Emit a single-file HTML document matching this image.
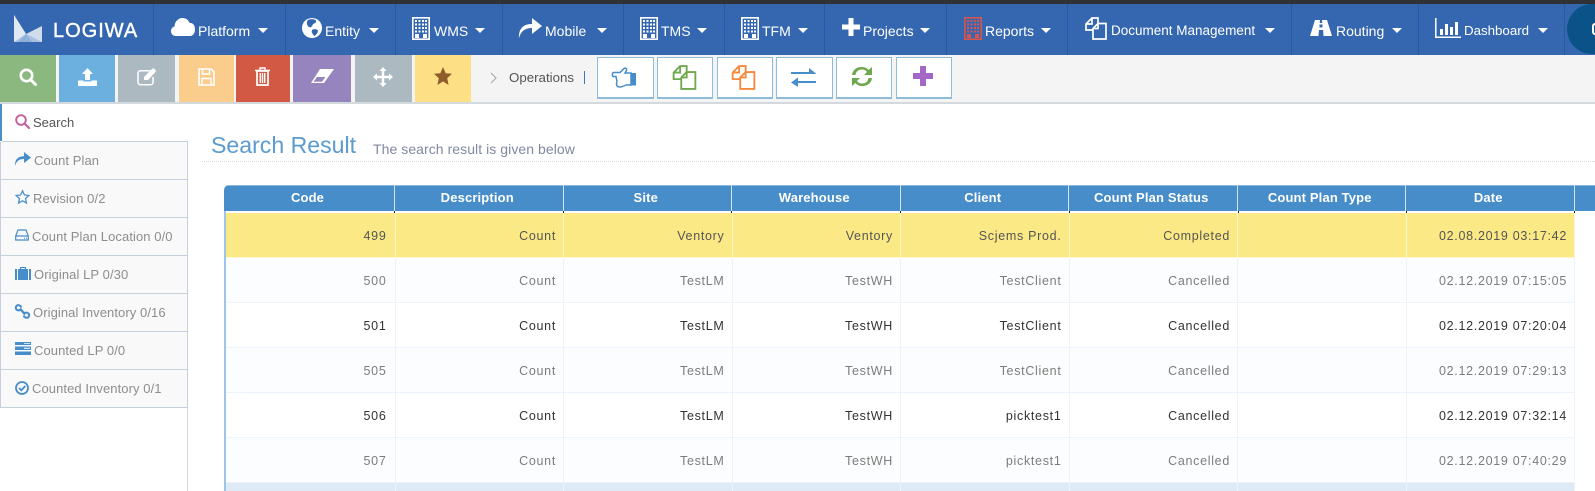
<!DOCTYPE html>
<html><head><meta charset="utf-8"><style>
html,body{margin:0;padding:0;background:#fff;width:1595px;height:491px;overflow:hidden}
body{position:relative;font-family:"Liberation Sans",sans-serif}
#p{position:absolute;left:0;top:0;width:1595px;height:491px;overflow:hidden}
.a{position:absolute}
svg{position:absolute;overflow:visible}
.dv{position:absolute;top:4px;height:51px;width:1px;background:#2a5a9e}
.n{position:absolute;top:22px;color:#fff;font-size:14px;line-height:18px;white-space:nowrap}
.c{position:absolute;top:28px;width:0;height:0;border-left:5px solid transparent;border-right:5px solid transparent;border-top:5.500px solid #fff;margin-left:-5px}
.t{position:absolute;top:55px;height:47px}
.w{position:absolute;top:57px;height:39px;background:#fff;border:1px solid #8fbcd8;border-bottom-width:2px;box-sizing:content-box}
.s{position:absolute;left:1px;width:186px;height:37px;background:#f9f9f9;border-bottom:1px solid #c5d0dc;border-right:1px solid #c5d0dc;font-size:13px;letter-spacing:.08px;line-height:37px;color:#8d8d8d;white-space:nowrap}
.s span{position:absolute;top:0}
table{position:absolute;border-collapse:separate;border-spacing:0;table-layout:fixed}
#h{top:185px;left:224px;width:1371px}
th{height:23px;padding:0 3px 2px 0;background:#478dc9;color:#fff;font-size:13px;letter-spacing:.15px;border-right:1px solid #d5e6f3;border-top:1px solid #8dbbdf;position:relative}
td{height:43px;padding:1px 7px 0 0;border-right:1px solid #edf3fa;border-bottom:1px solid #edf3fa;text-align:right;font-size:12.500px;letter-spacing:.7px;box-sizing:content-box;white-space:nowrap;overflow:hidden}
td:first-child{padding-right:8px}
.y td{background:#fbe985;color:#555;border-color:#fdf6cf}
.g td{background:#fcfdfe;color:#7c7c7c}
.k td{background:#fff;color:#333}
.b td{background:#deebf7;border-bottom:0;border-color:#eef5fb;height:8px;padding:0}
</style></head><body><div id="p">
<svg width="0" height="0" style="position:absolute"><defs>
<symbol id="bd" viewBox="0 0 18 23"><path d="M.8.8h16.400v21.400H.8z" fill="none" stroke="currentColor" stroke-width="1.600"/><path d="M3 3h2v2H3zM6.500 3h2v2h-2zM10 3h2v2h-2zM13 3h2v2h-2zM3 6.500h2v2H3zM6.500 6.500h2v2h-2zM10 6.500h2v2h-2zM13 6.500h2v2h-2zM3 10h2v2H3zM6.500 10h2v2h-2zM10 10h2v2h-2zM13 10h2v2h-2zM3 13.500h2v2H3zM6.500 13.500h2v2h-2zM10 13.500h2v2h-2zM13 13.500h2v2h-2zM3 17h4v4H3zM11 17h4v4h-4z" fill="currentColor"/></symbol>
<symbol id="dc" viewBox="0 0 22 23"><path d="M8 13H1V7l6-6h6v5.500M7 1v6H1" fill="none" stroke="currentColor" stroke-width="1.700"/><path d="M13 6.500h8V22H8V11.500zM13 6.500v5H8" fill="none" stroke="currentColor" stroke-width="1.700"/></symbol>
</defs></svg>

<div class="a" style="left:0;top:0;width:1595px;height:4px;background:#2f3135"></div>
<div class="a" style="left:0;top:4px;width:1595px;height:51px;background:#3567b0"></div>

<svg style="left:14px;top:15px" width="29" height="27" viewBox="0 0 29 27"><path d="M0 0 12 19 28 11V27H0z" fill="#cfdcec"/><path d="M0 27 12 19 28 27z" fill="#a9c1df"/><path d="M0 0 12 19 0 27z" fill="#dfe8f3"/><path d="M4 27 12 19 18 27z" fill="#8fb0d8"/></svg>
<div class="a" style="left:53px;top:20px;color:#fff;font-size:20px;line-height:22px;letter-spacing:1px;font-weight:400;-webkit-text-stroke:.4px #fff">LOGIWA</div>

<div class="dv" style="left:153px"></div><div class="dv" style="left:285px"></div><div class="dv" style="left:395px"></div><div class="dv" style="left:502px"></div><div class="dv" style="left:623px"></div><div class="dv" style="left:724px"></div><div class="dv" style="left:824px"></div><div class="dv" style="left:946px"></div><div class="dv" style="left:1067px"></div><div class="dv" style="left:1291px"></div><div class="dv" style="left:1418px"></div><div class="dv" style="left:1564px"></div>
<div class="a" style="left:1567px;top:4px;width:52px;height:50px;border-radius:26px;background:#0b5288"></div>
<div class="a" style="left:1592px;top:23px;width:6px;height:12px;border:2px solid #fff;border-radius:6px;box-sizing:border-box"></div>

<!-- nav icons -->
<svg style="left:171px;top:18px" width="24" height="18" viewBox="0 0 24 18"><path d="M5 18C2 18 0 16 0 13c0-2.500 1.500-4 3.500-4.500C3.500 4 7 0 11.500 0c3.500 0 6 2 7 5 3-.5 5.500 2 5.500 6.500 0 3.500-2 6.500-5 6.500z" fill="#fff"/></svg>
<svg style="left:302px;top:18px" width="20" height="20" viewBox="0 0 20 20"><circle cx="10" cy="10" r="10" fill="#fff"/><path d="M6 2c3-1.500 7-1 8 .5.500 2-1 3-3 3.500-1 2.500-2 4-4 3C5 8 4 4 6 2zM10 12c2-1.500 5-1 6 .5 0 2-2 5-4 5.500-1-2-3-3.500-2-6z" fill="#3567b0"/></svg>
<svg style="left:412px;top:17px;color:#fff" width="18" height="23"><use href="#bd"/></svg>
<svg style="left:519px;top:18px" width="23" height="20" viewBox="0 0 23 20"><path d="M0 20C-.5 11 4 6 13 6V0l10 8-10 8V10C6 10 2 13 0 20z" fill="#fff"/></svg>
<svg style="left:640px;top:17px;color:#fff" width="18" height="23"><use href="#bd"/></svg>
<svg style="left:741px;top:17px;color:#fff" width="18" height="23"><use href="#bd"/></svg>
<svg style="left:842px;top:18px" width="18" height="18" viewBox="0 0 18 18"><path d="M6.500 0h5v6.500H18v5h-6.500V18h-5v-6.500H0v-5h6.500z" fill="#fff"/></svg>
<svg style="left:964px;top:17px;color:#d9534f" width="18" height="23"><use href="#bd"/></svg>
<svg style="left:1085px;top:17px;color:#fff" width="22" height="23"><use href="#dc"/></svg>
<svg style="left:1310px;top:20px" width="22" height="16" viewBox="0 0 22 16"><path d="M5 0h5l-.3 3h2.600L12 0h5l5 16h-8.500l-.4-6H9l-.5 6H0z" fill="#fff"/><path d="M9.500 4.500h3v3h-3z" fill="#3567b0"/></svg>
<svg style="left:1435px;top:18px" width="26" height="20" viewBox="0 0 26 20"><path d="M.8 0v19.200H26" fill="none" stroke="#fff" stroke-width="1.500"/><path d="M5 11h3v6H5zM10 6h3v11h-3zM15 9h3v8h-3zM20 4h3v13h-3z" fill="#fff"/></svg>

<div class="n" style="left:198px">Platform</div><div class="c" style="left:263px"></div>
<div class="n" style="left:325px">Entity</div><div class="c" style="left:374px"></div>
<div class="n" style="left:434px">WMS</div><div class="c" style="left:480px"></div>
<div class="n" style="left:545px">Mobile</div><div class="c" style="left:602px"></div>
<div class="n" style="left:661px">TMS</div><div class="c" style="left:702px"></div>
<div class="n" style="left:762px">TFM</div><div class="c" style="left:803px"></div>
<div class="n" style="left:863px">Projects</div><div class="c" style="left:925px"></div>
<div class="n" style="left:985px">Reports</div><div class="c" style="left:1046px"></div>
<div class="n" style="left:1111px;font-size:13.500px">Document Management</div><div class="c" style="left:1270px"></div>
<div class="n" style="left:1336px">Routing</div><div class="c" style="left:1397px"></div>
<div class="n" style="left:1464px;font-size:13.300px">Dashboard</div><div class="c" style="left:1543px"></div>

<!-- toolbar -->
<div class="a" style="left:0;top:55px;width:1595px;height:47px;background:#f4f4f4"></div>
<div class="a" style="left:0;top:102px;width:1595px;height:2px;background:#d3d9dd"></div>
<div class="t" style="left:0;width:56px;background:#8ab87f"></div>
<div class="t" style="left:59px;width:56px;background:#6cb0e0"></div>
<div class="t" style="left:118px;width:57px;background:#acb9c1"></div>
<div class="t" style="left:179px;width:55px;background:#fbcd8d"></div>
<div class="t" style="left:236px;width:54px;background:#d25a45"></div>
<div class="t" style="left:293px;width:58px;background:#9584bd"></div>
<div class="t" style="left:355px;width:57px;background:#acb9c1"></div>
<div class="t" style="left:415px;width:56px;background:#fde085"></div>

<svg style="left:19px;top:68px" width="18" height="18" viewBox="0 0 18 18"><circle cx="7.500" cy="7.500" r="5.700" fill="none" stroke="#fff" stroke-width="2.600"/><path d="m11.500 11.500 5 5" stroke="#fff" stroke-width="3" stroke-linecap="round"/></svg>
<svg style="left:78px;top:68px" width="19" height="18" viewBox="0 0 19 18"><path d="M9.500 0 15 6h-3v6H7V6H4z" fill="#fff"/><path d="M0 12.500h5.500v1h8v-1H19V18H0z" fill="#fff"/></svg>
<svg style="left:137px;top:68px" width="20" height="18" viewBox="0 0 20 18"><path d="M13 2.800H3.500C2 2.800 1 3.800 1 5.200v9c0 1.500 1 2.500 2.500 2.500h10c1.500 0 2.500-1 2.500-2.500V9" fill="none" stroke="#fff" stroke-width="1.500"/><path d="M7 9 15 1c1-1 2-.5 3 .5s1 2 .5 2.500L11 12H7z" fill="#fff"/></svg>
<svg style="left:198px;top:68px" width="17" height="18" viewBox="0 0 17 18"><path d="M1 1h12l3 3v13H1z" fill="none" stroke="#fff" stroke-width="1.600"/><path d="M4.500 1v5h7V1M4 17v-6.500h9V17" fill="none" stroke="#fff" stroke-width="1.400"/></svg>
<svg style="left:255px;top:67px" width="15" height="19" viewBox="0 0 15 19"><path d="M0 3.500h15M5 3.500V1h5v2.500" fill="none" stroke="#fff" stroke-width="1.500"/><path d="M2 4h11v14H2z" fill="none" stroke="#fff" stroke-width="1.700"/><path d="M4.600 6h1.400v10H4.600zM6.800 6h1.400v10H6.800zM9 6h1.400v10H9z" fill="#fff"/></svg>
<svg style="left:311px;top:69px" width="23" height="14" viewBox="0 0 23 14"><path d="M9 0h14L13 14H0z" fill="#fff"/><path d="M2.500 12.800 6 8h8.500L11 12.800z" fill="#9584bd"/></svg>
<svg style="left:373px;top:67px" width="20" height="20" viewBox="0 0 20 20"><path d="M10 0l3.500 4H11.200v4.800H16V6.500l4 3.500-4 3.500v-2.300h-4.800V16h2.300L10 20l-3.500-4h2.300v-4.800H4v2.300L0 10l4-3.500v2.300h4.800V4H6.500z" fill="#fff"/></svg>
<svg style="left:434px;top:67px" width="18" height="18" viewBox="0 0 18 18"><path d="m9 0 2.700 6.200L18 6.800l-4.800 4.400L14.600 18 9 14.400 3.400 18l1.400-6.800L0 6.800l6.300-.6z" fill="#8f5c2c"/></svg>

<svg style="left:490px;top:72px" width="7" height="12" viewBox="0 0 7 12"><path d="m1 1 5 5-5 5" fill="none" stroke="#a8a8a8" stroke-width="1.100"/></svg>
<div class="a" style="left:509px;top:69px;color:#555;font-size:13.300px;line-height:18px">Operations</div>
<div class="a" style="left:584px;top:71px;width:1px;height:13px;background:#3f78b5"></div>

<div class="w" style="left:597px;width:55px"></div>
<div class="w" style="left:657px;width:54px"></div>
<div class="w" style="left:717px;width:54px"></div>
<div class="w" style="left:776px;width:55px"></div>
<div class="w" style="left:836px;width:54px"></div>
<div class="w" style="left:896px;width:54px"></div>

<svg style="left:612px;top:67px" width="25" height="21" viewBox="0 0 25 21"><path d="M1.500 5.500h6.500l4-4c1.500-1 3 0 2.500 2L13 6h6v12h-5c-2 1-4 2-6 2-2.500 0-3.500-1-3.500-3 0-1 0-2 .5-2.500L4 9.500H1.500C0 9.500 0 6 1.500 5.500z" fill="#fff" stroke="#478dc9" stroke-width="1.500"/><path d="M18.500 6H24v12.500h-5.500z" fill="#478dc9"/></svg>
<svg style="left:672px;top:65px;color:#6fa84f" width="25" height="25"><use href="#dc"/></svg>
<svg style="left:731px;top:65px;color:#f58a3c" width="25" height="25"><use href="#dc"/></svg>
<svg style="left:791px;top:68px" width="25" height="19" viewBox="0 0 25 19"><path d="M0 4h18V0l7 5.500-.2.500H0zM25 13H7V9.500L0 14.500l7 4.500v-4h18z" fill="#478dc9"/></svg>
<svg style="left:851px;top:66px" width="22" height="21" viewBox="0 0 22 21"><path d="M1 9C1.500 4 5.500 1 10.500 1c3 0 5.500 1 7 3L21 1v8h-8l3-3c-1-1.500-3-2.500-5.500-2.500C7.500 3.500 5 5.500 4.500 9zM21 12c-.5 5-4.500 8-9.500 8-3 0-5.500-1-7-3L1 20v-8h8l-3 3c1 1.500 3 2.500 5.500 2.500 3 0 5.500-2 6-5.500z" fill="#6fa84f"/></svg>
<svg style="left:913px;top:66px" width="20" height="20" viewBox="0 0 20 20"><path d="M7 0h6v7h7v6h-7v7H7v-7H0V7h7z" fill="#a368c6"/></svg>

<!-- sidebar -->
<div class="a" style="left:187px;top:104px;width:1px;height:387px;background:#ccd8e4"></div>
<div class="a" style="left:0;top:104px;width:2px;height:37px;background:#4a8fc9"></div>
<div class="a" style="left:2px;top:104px;width:186px;height:37px;background:#fff;border-bottom:1px solid #c5d0dc;font-size:13px;line-height:37px;color:#555"><span class="a" style="left:31px">Search</span></div>
<div class="a" style="left:0;top:142px;width:1px;height:266px;background:#c5d0dc"></div>
<div class="s" style="top:142px"><span style="left:33px">Count Plan</span></div>
<div class="s" style="top:180px"><span style="left:32px">Revision 0/2</span></div>
<div class="s" style="top:218px"><span style="left:31px">Count Plan Location 0/0</span></div>
<div class="s" style="top:256px"><span style="left:33px">Original LP 0/30</span></div>
<div class="s" style="top:294px"><span style="left:32px">Original Inventory 0/16</span></div>
<div class="s" style="top:332px"><span style="left:33px">Counted LP 0/0</span></div>
<div class="s" style="top:370px"><span style="left:31px">Counted Inventory 0/1</span></div>

<svg style="left:15px;top:114px" width="15" height="15" viewBox="0 0 15 15"><circle cx="6" cy="6" r="4.800" fill="none" stroke="#c4609b" stroke-width="1.900"/><path d="m9.500 9.500 4.500 4.500" stroke="#c4609b" stroke-width="2.200" stroke-linecap="round"/></svg>
<svg style="left:15px;top:152px" width="16" height="14" viewBox="0 0 23 20"><path d="M0 20C-.5 11 4 6 13 6V0l10 8-10 8V10C6 10 2 13 0 20z" fill="#478dc9"/></svg>
<svg style="left:15px;top:190px" width="15" height="14" viewBox="0 0 18 18"><path d="m9 1 2.400 5.400 5.800.6-4.300 4 1.200 5.800L9 13.900 3.900 16.800l1.200-5.800L.8 7l5.800-.6z" fill="none" stroke="#478dc9" stroke-width="1.600"/></svg>
<svg style="left:15px;top:229px" width="14" height="12" viewBox="0 0 14 12"><path d="M.7 7 3 1h8l2.300 6v4H.7zM.7 7h12.600" fill="none" stroke="#478dc9" stroke-width="1.200"/><path d="M9 8.800h1v1H9zM11 8.800h1v1h-1z" fill="#478dc9"/></svg>
<svg style="left:15px;top:266px" width="16" height="14" viewBox="0 0 16 14"><path d="M0 3h2v11H0zM14 3h2v11h-2zM3 3h10v11H3zM5 3V1h6v2h-1.300V2H6.300v1z" fill="#478dc9"/></svg>
<svg style="left:15px;top:304px" width="15" height="15" viewBox="0 0 15 15"><path d="M6.500 3.500C5.500 1.500 3.500.5 2 1.500S.5 4.500 1.500 5.500 4 6.500 5.500 6M8.500 11.500c1 2 3 3 4.500 2s1.500-3 .5-4-2.500-1-4-.5" fill="none" stroke="#478dc9" stroke-width="2"/><path d="m5 4.500 5 6" stroke="#478dc9" stroke-width="2.200"/></svg>
<svg style="left:15px;top:342px" width="16" height="13" viewBox="0 0 16 13"><path d="M0 0h16v3H0zM0 4.500h16v3.500H0zM0 9.500h16V13H0z" fill="#478dc9"/><path d="M9 5.700h6v1H9zM9 1h6v.8H9z" fill="#fff"/></svg>
<svg style="left:15px;top:381px" width="14" height="14" viewBox="0 0 14 14"><circle cx="7" cy="7" r="6" fill="none" stroke="#478dc9" stroke-width="1.800"/><path d="m4 7 2.300 2.300L10.300 5" fill="none" stroke="#478dc9" stroke-width="1.800"/></svg>

<!-- title -->
<div class="a" style="left:211px;top:130px;color:#5b9bcf;font-size:23.100px;line-height:30px;white-space:nowrap">Search Result</div>
<div class="a" style="left:373px;top:140px;color:#8089a0;font-size:14px;letter-spacing:.06px;line-height:18px;white-space:nowrap">The search result is given below</div>
<div class="a" style="left:202px;top:161px;width:1393px;height:0;border-top:1px dotted #d8d8d8"></div>

<!-- table -->
<table id="h" style="border-top-left-radius:5px;overflow:hidden"><colgroup><col style="width:171px"><col style="width:168.500px"><col style="width:168.500px"><col style="width:168.500px"><col style="width:168.500px"><col style="width:168.500px"><col style="width:168.500px"><col style="width:168.500px"><col></colgroup>
<tr><th>Code</th><th>Description</th><th>Site</th><th>Warehouse</th><th>Client</th><th>Count Plan Status</th><th>Count Plan Type</th><th>Date</th><th style="border-right:0"></th></tr></table>
<div class="a" style="left:394px;top:211px;width:1px;height:2px;background:#222"></div><div class="a" style="left:563px;top:211px;width:1px;height:2px;background:#222"></div><div class="a" style="left:731px;top:211px;width:1px;height:2px;background:#222"></div><div class="a" style="left:900px;top:211px;width:1px;height:2px;background:#222"></div><div class="a" style="left:1069px;top:211px;width:1px;height:2px;background:#222"></div><div class="a" style="left:1238px;top:211px;width:1px;height:2px;background:#222"></div><div class="a" style="left:1406px;top:211px;width:1px;height:2px;background:#222"></div><div class="a" style="left:1574px;top:211px;width:1px;height:2px;background:#222"></div>

<table style="top:213px;left:226px;width:1349px"><colgroup><col style="width:169.500px"><col style="width:168.500px"><col style="width:168.500px"><col style="width:168.500px"><col style="width:168.500px"><col style="width:168.500px"><col style="width:168.500px"><col style="width:168.500px"></colgroup>
<tr class="y"><td>499</td><td>Count</td><td>Ventory</td><td>Ventory</td><td>Scjems Prod.</td><td>Completed</td><td></td><td>02.08.2019 03:17:42</td></tr>
<tr class="g"><td>500</td><td>Count</td><td>TestLM</td><td>TestWH</td><td>TestClient</td><td>Cancelled</td><td></td><td>02.12.2019 07:15:05</td></tr>
<tr class="k"><td>501</td><td>Count</td><td>TestLM</td><td>TestWH</td><td>TestClient</td><td>Cancelled</td><td></td><td>02.12.2019 07:20:04</td></tr>
<tr class="g"><td>505</td><td>Count</td><td>TestLM</td><td>TestWH</td><td>TestClient</td><td>Cancelled</td><td></td><td>02.12.2019 07:29:13</td></tr>
<tr class="k"><td>506</td><td>Count</td><td>TestLM</td><td>TestWH</td><td>picktest1</td><td>Cancelled</td><td></td><td>02.12.2019 07:32:14</td></tr>
<tr class="g"><td>507</td><td>Count</td><td>TestLM</td><td>TestWH</td><td>picktest1</td><td>Cancelled</td><td></td><td>02.12.2019 07:40:29</td></tr>
<tr class="b"><td></td><td></td><td></td><td></td><td></td><td></td><td></td><td></td></tr>
</table>
<div class="a" style="left:224px;top:211px;width:2px;height:280px;background:#9cc5e8"></div>
</div></body></html>
